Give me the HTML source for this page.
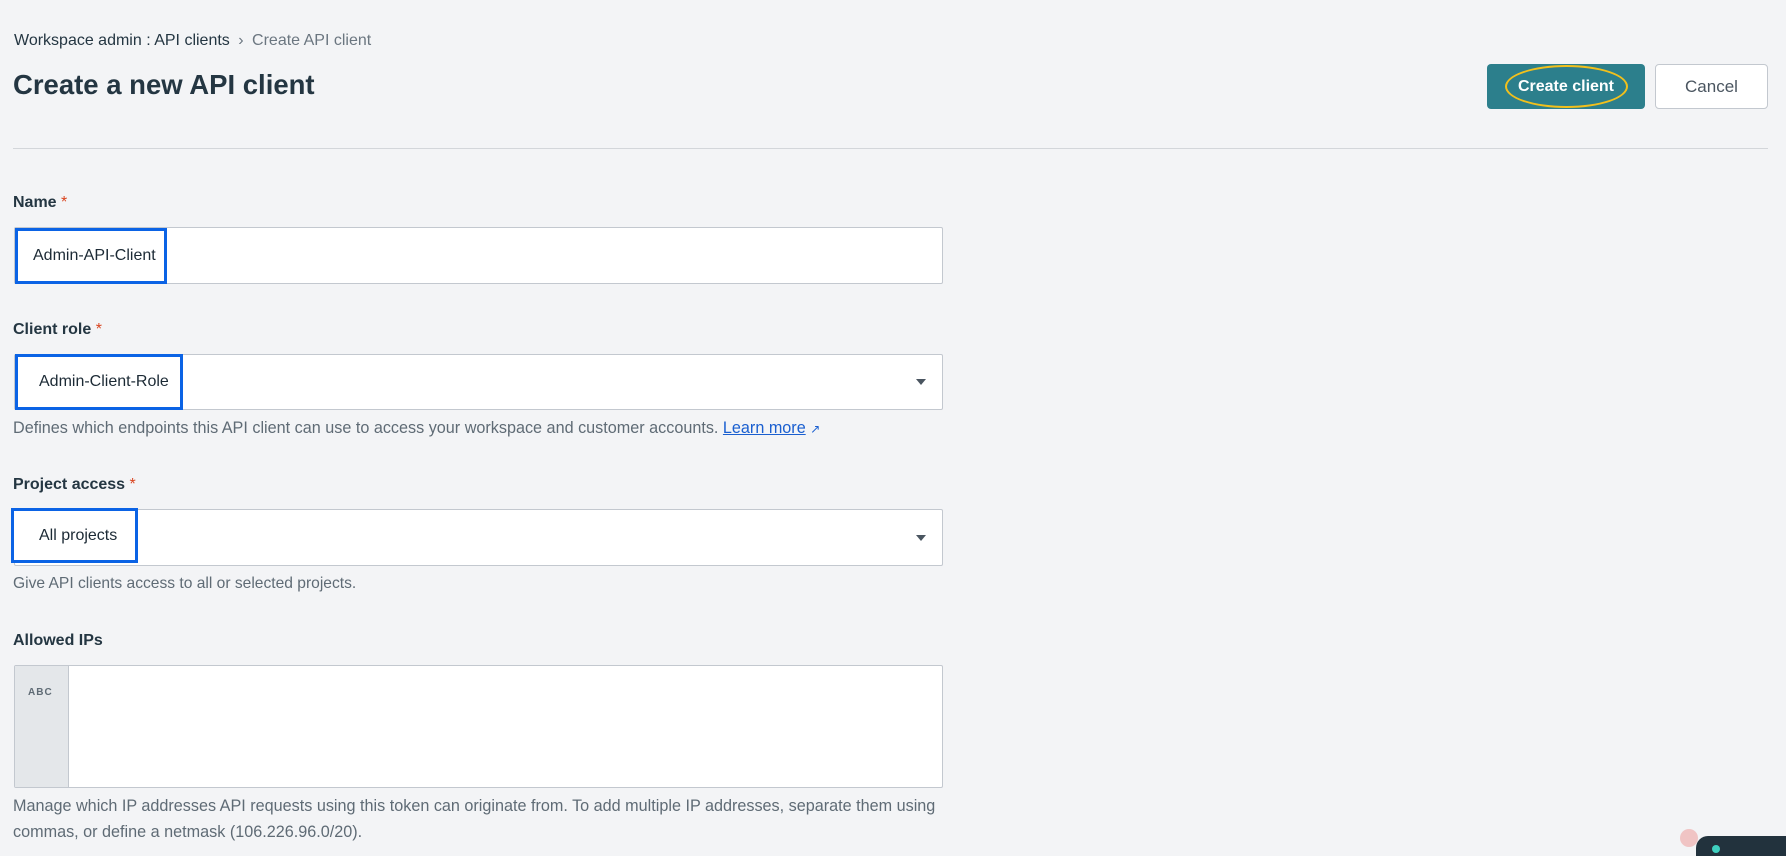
<!DOCTYPE html>
<html><head><meta charset="utf-8"><style>
*{margin:0;padding:0;box-sizing:border-box}
html,body{width:1786px;height:848px;overflow:hidden;background:#f3f4f6;font-family:"Liberation Sans",sans-serif;color:#1f2f3a}
.a{position:absolute;white-space:nowrap}
.lbl{font-size:16px;font-weight:bold;color:#243642}
.star{color:#d9431e;font-weight:normal}
.inp{position:absolute;left:14px;width:929px;background:#fff;border:1px solid #c3c8cf;border-radius:2px}
.blue{position:absolute;border:3px solid #0b63e5;background:#fff;font-size:16px;color:#1c2a35;display:flex;align-items:center}
.help{font-size:16.2px;color:#5f6b75}
.caret{position:absolute;right:16px;top:50%;margin-top:-3px;width:0;height:0;border-left:5px solid transparent;border-right:5px solid transparent;border-top:6px solid #4a5560}
</style></head><body>
<div class="a" style="left:14px;top:32px;font-size:16px;color:#243642">Workspace admin : API clients <span style="color:#6b7680;margin:0 4px">›</span> <span style="color:#6b7680">Create API client</span></div>
<div class="a" style="left:13px;top:69px;font-size:27.5px;font-weight:bold;color:#243642">Create a new API client</div>
<div class="a" style="left:1487px;top:64px;width:158px;height:45px;background:#2c7f8c;border-radius:4px"></div>
<div class="a" style="left:1505px;top:65px;width:123px;height:43px;border:2.5px solid #f2c01c;border-radius:50%"></div>
<div class="a" style="left:1487px;top:64px;width:158px;height:45px;line-height:45px;text-align:center;color:#fff;font-weight:bold;font-size:16px">Create client</div>
<div class="a" style="left:1655px;top:64px;width:113px;height:45px;line-height:43px;text-align:center;background:#fff;border:1px solid #c3c8cf;border-radius:4px;color:#4a5560;font-size:17px">Cancel</div>
<div class="a" style="left:13px;top:148px;width:1755px;height:1px;background:#d3d6da"></div>

<div class="a lbl" style="left:13px;top:194px">Name<span class="star"> *</span></div>
<div class="inp" style="top:227px;height:57px"></div>
<div class="blue" style="left:15px;top:228px;width:152px;height:56px;padding-left:15px">Admin-API-Client</div>

<div class="a lbl" style="left:13px;top:321px">Client role <span class="star"> *</span></div>
<div class="inp" style="top:354px;height:56px"><div class="caret"></div></div>
<div class="blue" style="left:15px;top:354px;width:168px;height:56px;padding-left:21px">Admin-Client-Role</div>
<div class="a help" style="left:13px;top:419px">Defines which endpoints this API client can use to access your workspace and customer accounts. <span style="color:#1a5fd0;text-decoration:underline">Learn more</span> <span style="color:#1a5fd0;font-size:12px">↗</span></div>

<div class="a lbl" style="left:13px;top:476px">Project access<span class="star"> *</span></div>
<div class="inp" style="top:509px;height:57px"><div class="caret"></div></div>
<div class="blue" style="left:11px;top:508px;width:127px;height:55px;padding-left:25px">All projects</div>
<div class="a help" style="left:13px;top:575px;font-size:15.6px">Give API clients access to all or selected projects.</div>

<div class="a lbl" style="left:13px;top:632px">Allowed IPs</div>
<div class="inp" style="top:665px;height:123px;overflow:hidden"><div style="position:absolute;left:0;top:0;width:54px;height:100%;background:#e4e7ea;border-right:1px solid #c3c8cf"></div><div style="position:absolute;left:13px;top:21px;font-size:10px;font-weight:bold;color:#5f6b75;letter-spacing:1px">ABC</div></div>
<div class="a help" style="left:13px;top:797px">Manage which IP addresses API requests using this token can originate from. To add multiple IP addresses, separate them using</div>
<div class="a help" style="left:13px;top:823px">commas, or define a netmask (106.226.96.0/20).</div>

<div class="a" style="left:1696px;top:836px;width:100px;height:20px;background:#22323d;border-radius:12px 0 0 0"></div>
<div class="a" style="left:1680px;top:829px;width:18px;height:18px;background:#f0c4c4;border-radius:50%"></div>
<div class="a" style="left:1712px;top:845px;width:8px;height:8px;background:#3fd0c0;border-radius:50%"></div>
</body></html>
